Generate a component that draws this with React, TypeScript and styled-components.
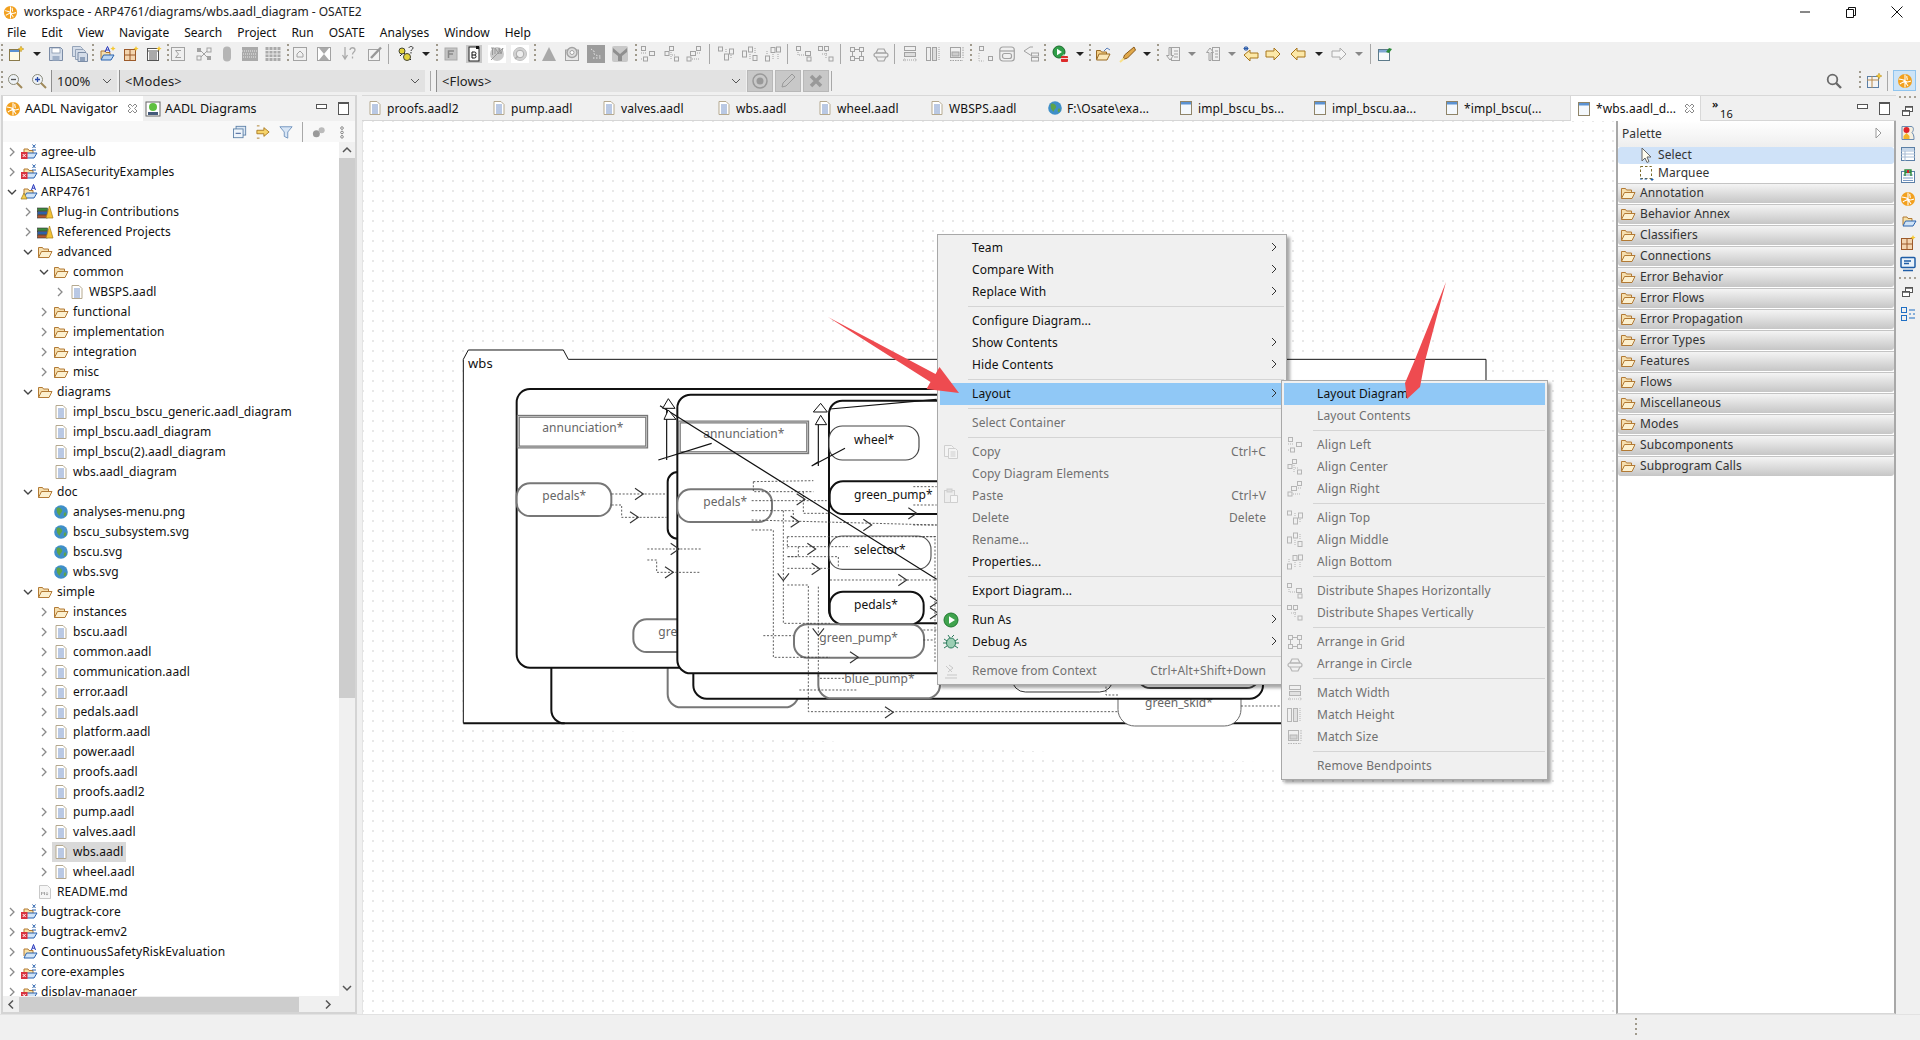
import React from "react";
import styled, { createGlobalStyle } from "styled-components";

const GlobalStyle = createGlobalStyle`
    html, body { margin: 0; padding: 0; background: #f0f0f0; }
    body { font-family: "Noto Sans", "Noto Sans CJK SC", sans-serif; font-size: 12px; color: #111; }
`;

const G = "#a2a2a2";
const STAR = <path d="M13 0l.8 1.8 1.8.8-1.8.8L13 5l-.8-1.6-1.8-.8 1.8-.8z" fill="#f5c832" />;
const BIGSTAR = <path d="M13 0l.9 2.1L16 3l-2.1.9L13 6l-.9-2.1L10 3l2.1-.9z" fill="#f5c832" stroke="#a8801a" strokeWidth=".4" />;
const PROJECT = (
    <>
        <path d="M3 12V5h4l1 1.5h4V9" fill="#f9e3a8" stroke="#b27a35" />
        <path d="M3 14l2.5-5H16l-3 5z" fill="#cfe3f7" stroke="#2a62ad" />
    </>
);
const LETTER_A = <path d="M10.5 6l2-5.5 2 5.5M11.3 4.2h2.5" stroke="#2233bb" fill="none" />;
const ICONS: Record<string, React.ReactNode> = {
    osate: (
        <>
            <circle cx="8" cy="8" r="7" fill="#f2a01e" />
            <path d="M8 1.5v13M2 6c3 1 4 0 6 2s3 1 6 0M3 11c2-2 3-1 5-3M10 3c-1 2 1 2 0 4M11 13c-1-2-2-2-3-5" stroke="#fff" strokeWidth="1.1" fill="none" />
        </>
    ),
    file: (
        <>
            <path d="M3 1.5h7l3 3v10H3z" fill="#fff" stroke="#b5a98f" />
            <path d="M5 5h6M5 7h6M5 9h6M5 11h6M5 13h6" stroke="#7592c8" />
        </>
    ),
    winfile: (
        <>
            <rect x="2.5" y="1.5" width="11" height="13" fill="#f4f8fc" stroke="#8f8468" />
            <rect x="3" y="2" width="10" height="2.5" fill="#5b92d2" />
        </>
    ),
    folder: (
        <>
            <path d="M1.5 13.5v-10h4l1 1.5h5v2.5" fill="#f6dfae" stroke="#b27a35" />
            <path d="M1.5 13.5l3-6H15l-3 6z" fill="#fcf0cf" stroke="#b27a35" />
        </>
    ),
    bluefolder: (
        <>
            <path d="M3 12V4h4l1 1.5h4V8" fill="#f9e3a8" stroke="#b27a35" />
            <path d="M3 13l2.5-5H16l-3 5z" fill="#cfe3f7" stroke="#2a62ad" />
        </>
    ),
    projx: (
        <>
            {PROJECT}
            <path d="M11.5 .5l3 3.5M14.5 .5l-3 3.5M11 6h4" stroke="#2a62ad" fill="none" />
            <rect x="0" y="8" width="6.5" height="7" fill="#d9343f" />
            <path d="M1.7 10l3 3M4.7 10l-3 3" stroke="#fff" />
        </>
    ),
    proja: (
        <>
            {PROJECT}
            {LETTER_A}
        </>
    ),
    projw: (
        <>
            {PROJECT}
            {LETTER_A}
            <path d="M0 15l3-6 3 6z" fill="#f5cd4a" stroke="#9a7a22" strokeWidth=".7" />
        </>
    ),
    lib: (
        <>
            <rect x=".5" y="4" width="10" height="3" fill="#3c8a3c" stroke="#333" strokeWidth=".6" />
            <rect x=".5" y="7.5" width="10" height="3" fill="#2f5fa8" stroke="#333" strokeWidth=".6" />
            <rect x=".5" y="11" width="10" height="3" fill="#b5572c" stroke="#333" strokeWidth=".6" />
            <path d="M9 14l3.5-12L16 14z" fill="#f3c235" stroke="#a77e18" strokeWidth=".7" />
        </>
    ),
    globe: (
        <>
            <circle cx="8" cy="8" r="6.8" fill="#3f8fc8" />
            <path d="M4 4c2-1 4 0 5 2s-2 3-2 5-3-2-3-3-1-3 0-4zM11 9c2-1 3 0 2 2s-3 2-2-2z" fill="#5da34a" />
        </>
    ),
    md: (
        <>
            <path d="M2.5 1.5h8l3 3v10h-11z" fill="#f6f6f6" stroke="#c9c9c9" />
            <path d="M4.5 11V8L6 9.5 7.5 8v3M10 8v3M8.800 10l1.200 1 1.200-1" stroke="#a8a8a8" fill="none" />
        </>
    ),
    newfile: (
        <>
            <rect x="1.5" y="3.5" width="10" height="11" fill="#fffbe6" stroke="#8a7a4a" />
            <rect x="2" y="4" width="9" height="2" fill="#5b92d2" />
            {BIGSTAR}
        </>
    ),
    save: (
        <>
            <path d="M1.5 1.5h11l2 2v11h-13z" fill="#d5dde9" stroke="#7b8ca6" />
            <rect x="4" y="2" width="8" height="5" fill="#fff" stroke="#7b8ca6" strokeWidth=".7" />
            <rect x="4.5" y="10" width="7" height="4.5" fill="#9fb0c8" />
        </>
    ),
    saveall: (
        <>
            <path d="M.5 .5h8l2 2v8H.5z" fill="#d5dde9" stroke="#94a3b8" />
            <path d="M3.5 3.5h8l2 2v8h-10z" fill="#d5dde9" stroke="#94a3b8" />
            <path d="M6 6.5h8L15.5 8v7.5H6z" fill="#d5dde9" stroke="#7b8ca6" />
            <rect x="8" y="11" width="5" height="4" fill="#8fa1bb" />
        </>
    ),
    newa: (
        <>
            <path d="M1 13V5h4l1 1.500h4V9" fill="#f6dfae" stroke="#b27a35" />
            <path d="M1 14l2.5-5H14l-3 5z" fill="#bcd6f2" stroke="#2a62ad" />
            <path d="M5 6L7.5.5 10 6M6 4h3" stroke="#2233bb" fill="none" />
            {STAR}
        </>
    ),
    newpkg: (
        <>
            <rect x="1.5" y="3.5" width="11" height="11" fill="#f3d5b0" stroke="#9c5a2a" />
            <path d="M7 3v12M1 9h12" stroke="#9c5a2a" />
            {STAR}
        </>
    ),
    newtbl: (
        <>
            <rect x="1.5" y="2.5" width="11" height="12" fill="#fff" stroke="#555" />
            <path d="M1 5h12M3 7h8M3 9h8M3 11h8M3 13h8" stroke="#555" />
            {STAR}
        </>
    ),
    sigma: (
        <>
            <rect x="1.5" y="1.5" width="13" height="13" fill="none" stroke={G} />
            <path d="M11 4.5H5.5L8.5 8l-3 3.5H11" stroke={G} fill="none" />
        </>
    ),
    cross: (
        <>
            <path d="M5 5l6 6M11 5l-6 6" stroke={G} fill="none" />
            <rect x="1" y="2" width="4" height="4" fill={G} />
            <rect x="11" y="2" width="4" height="4" fill="none" stroke={G} />
            <rect x="1" y="10" width="4" height="4" fill="none" stroke={G} />
            <rect x="11" y="10" width="4" height="4" fill={G} />
        </>
    ),
    pill: <rect x="4" y=".5" width="8" height="15" rx="4" fill="#b5b5b5" />,
    matrix: (
        <>
            <rect x="0" y="1" width="16" height="14" fill="#aaa" />
            <path d="M0 5h16M1 8h14M1 11h14" stroke="#e8e8e8" strokeDasharray="1 1" />
        </>
    ),
    grid2: (
        <>
            <rect x=".5" y="1" width="15" height="14" fill="#aaa" />
            <path d="M4 1v14M8 1v14M12 1v14M0 4.5h16M0 8h16M0 11.5h16" stroke="#e8e8e8" />
        </>
    ),
    tray: (
        <>
            <rect x="1.5" y="1.5" width="13" height="13" fill="none" stroke={G} />
            <path d="M5 8l3-3 3 3v3H5z" fill="none" stroke={G} />
        </>
    ),
    hour: (
        <>
            <rect x="1.5" y="1.5" width="13" height="13" fill="#fff" stroke={G} />
            <path d="M3 2l5 6 5-6zM3 14l5-6 5 6z" fill="#aaa" />
        </>
    ),
    qdown: <path d="M4 1v11M1.5 9L4 13l2.5-4M9 4c0-3 5-3 5 0 0 2-2.500 2-2.500 4.500M11.5 10.500v2" fill="none" stroke="#aaa" strokeWidth="1.3" />,
    edit: (
        <>
            <rect x="1.5" y="3.5" width="11" height="11" fill="#f4f4f4" stroke={G} />
            <path d="M4 12L14 1.5" stroke="#999" strokeWidth="2.5" />
        </>
    ),
    bug: (
        <>
            <path d="M2 3l11 11M2 10l5-5" stroke="#222" />
            <circle cx="4" cy="5" r="3" fill="#e4d33a" stroke="#443" />
            <circle cx="9" cy="11" r="3.5" fill="#e4d33a" stroke="#443" />
            <path d="M11 2c0-2 4-2 4 0 0 1.5-2 1.5-2 3M13 6v1.5" stroke="#333" fill="none" />
        </>
    ),
    docf: (
        <>
            <rect x="2" y="2" width="12" height="12" fill="#c4c4c4" stroke="#aaa" />
            <path d="M5.5 12V5H11M5.5 8H10" stroke="#888" strokeWidth="1.5" fill="none" />
        </>
    ),
    docb: (
        <>
            <rect x="0" y="-1" width="16" height="18" fill="#c8c8c8" />
            <rect x="3" y="1" width="10" height="14" fill="#fff" stroke="#222" />
            <path d="M6 12V6h2.5a1.4 1.4 0 010 3H6m2.500 0a1.5 1.5 0 010 3H6" fill="none" stroke="#111" />
            <rect x="10" y="0" width="3" height="3" fill="#111" />
        </>
    ),
    inv: (
        <>
            <rect x="-1" y="-1" width="18" height="18" fill="#fff" />
            <circle cx="8" cy="8" r="7" fill="#c9c9c9" />
            <path d="M2 2h3M3.5 2v7M6 8V2l4 6V2M10 2l2 6 2-6M2 14L14 2" stroke="#999" fill="none" />
        </>
    ),
    circ: (
        <>
            <rect x="-1" y="-1" width="18" height="18" fill="#fff" />
            <circle cx="8" cy="8" r="6.5" fill="#d3d3d3" stroke="#c0c0c0" />
            <circle cx="8" cy="8" r="3.8" fill="#eee" stroke="#aaa" />
            <path d="M3 13l3-3" stroke="#aaa" strokeWidth="1.5" />
        </>
    ),
    tri: <path d="M8 1l7 14H1z" fill="#a9a9a9" />,
    shield: (
        <>
            <rect x="1.5" y="4" width="13" height="10.5" fill="#e8e8e8" stroke={G} />
            <circle cx="8" cy="6.5" r="5" fill="#ddd" stroke={G} strokeWidth="1.5" />
            <circle cx="8" cy="6.5" r="2" fill="#fff" stroke={G} />
        </>
    ),
    dark: (
        <>
            <rect x="-1" y="-1" width="18" height="18" fill="#9c9c9c" />
            <path d="M3 3l3 2 0 3 4 2 3 0M5 12h8" stroke="#e8e8e8" strokeDasharray="1.5 1.5" fill="none" />
        </>
    ),
    chev: (
        <>
            <rect x="0" y="0" width="16" height="16" rx="2" fill="#c8c8c8" />
            <path d="M1 2l7 6 7-6v4l-5 4v5H6v-5L1 6z" fill="#8f8f8f" />
        </>
    ),
    al1: (
        <g fill="none" stroke={G}>
            <rect x="1.5" y=".5" width="4" height="4" />
            <rect x="9.5" y="5.5" width="5" height="4" />
            <rect x="3.5" y="11" width="4" height="4" />
            <path d="M1 7h5M1 13h2" strokeDasharray="1 1" />
        </g>
    ),
    al2: (
        <g fill="none" stroke={G}>
            <rect x="5.5" y=".5" width="4" height="4" />
            <rect x="1" y="5.5" width="4" height="4" />
            <rect x="10.5" y="11" width="4" height="4" />
            <path d="M7 6v8M8 9h4" strokeDasharray="1 1" />
        </g>
    ),
    al3: (
        <g fill="none" stroke={G}>
            <rect x="10.5" y=".5" width="4" height="4" />
            <rect x="4.5" y="5.5" width="5" height="4" />
            <rect x="1" y="11" width="4" height="4" />
            <path d="M11 7h4M6 13h8" strokeDasharray="1 1" />
        </g>
    ),
    al4: (
        <g fill="none" stroke={G}>
            <rect x=".5" y="1" width="4" height="4" />
            <rect x="6.5" y="8" width="4" height="6" />
            <rect x="11.5" y="3" width="4" height="5" />
            <path d="M8 3v4M13 9v4" strokeDasharray="1 1" />
        </g>
    ),
    al5: (
        <g fill="none" stroke={G}>
            <rect x=".5" y="5" width="4" height="6" />
            <rect x="6.5" y="1" width="4" height="5" />
            <rect x="11" y="9.5" width="4" height="5" />
            <path d="M8 8v5M13 2v6" strokeDasharray="1 1" />
        </g>
    ),
    al6: (
        <g fill="none" stroke={G}>
            <rect x=".5" y="10" width="4" height="5" />
            <rect x="6" y="1.5" width="4" height="5" />
            <rect x="11.5" y="1" width="4" height="5" />
            <path d="M2 5v4M8 8v6M13 8v6" strokeDasharray="1 1" />
        </g>
    ),
    di1: (
        <g fill="none" stroke={G}>
            <rect x=".5" y=".5" width="4" height="4" />
            <rect x="9.5" y="5.5" width="5" height="4" />
            <rect x="11" y="11" width="4" height="4" />
            <path d="M2 6v3h7" strokeDasharray="1 1" />
        </g>
    ),
    di2: (
        <g fill="none" stroke={G}>
            <rect x=".5" y=".5" width="4" height="4" />
            <rect x="6.5" y=".5" width="4" height="4" />
            <rect x="11" y="11" width="4" height="4" />
            <path d="M8 5v7M4 8h5" strokeDasharray="1 1" />
        </g>
    ),
    agrid: (
        <g fill="none" stroke={G}>
            <rect x="1.5" y="1.5" width="4" height="4" />
            <rect x="10.5" y="1.5" width="4" height="4" />
            <rect x="1.5" y="10.5" width="4" height="4" />
            <rect x="10.5" y="10.5" width="4" height="4" />
            <path d="M6 3.5h4M6 12.5h4M3.5 6v4M12.5 6v4" />
        </g>
    ),
    acircle: (
        <g fill="none" stroke={G} strokeWidth="1.2">
            <path d="M5 3h6l2 4H3z" />
            <rect x="1" y="7" width="14" height="4" rx="2" />
            <path d="M3 11l2 4h6l2-4" />
        </g>
    ),
    mw: (
        <g fill="none" stroke={G}>
            <rect x="2.5" y=".5" width="11" height="4" />
            <rect x="2.5" y="6.5" width="11" height="4" fill="#ddd" />
            <path d="M1 14h14M3 12.5L1.5 14 3 15.5M13 12.5l1.5 1.5-1.5 1.5" strokeDasharray="1 1" />
        </g>
    ),
    mh: (
        <g fill="none" stroke={G}>
            <rect x=".5" y="1.5" width="4" height="13" />
            <rect x="6.5" y="1.5" width="4" height="13" fill="#ddd" />
            <path d="M13 1v14" strokeDasharray="1 1" />
        </g>
    ),
    ms: (
        <g fill="none" stroke={G}>
            <rect x="1.5" y="1.5" width="10" height="10" />
            <rect x="3" y="6" width="7" height="4" fill="#ccc" />
            <path d="M14 1v11M1 14.5h13" strokeDasharray="1.5 1" />
        </g>
    ),
    bend: (
        <g fill="none" stroke={G}>
            <rect x="1.5" y=".5" width="4" height="4" />
            <rect x="10.5" y="10.5" width="4" height="4" />
            <path d="M1 7v8h5" strokeDasharray="1 1.5" />
        </g>
    ),
    cyl: (
        <g fill="none" stroke={G} strokeWidth="1.2">
            <rect x=".8" y="1" width="14.5" height="14" rx="3" />
            <path d="M1 5h14" />
            <rect x="3.5" y="7.5" width="9" height="5" rx="2" />
        </g>
    ),
    route: (
        <g fill="none" stroke={G}>
            <path d="M1 5l6-4h3M1 5l8 5" />
            <rect x="8.5" y="7" width="7" height="3" />
            <rect x="8.5" y="11.5" width="7" height="3.5" />
        </g>
    ),
    run: (
        <>
            <circle cx="7" cy="6" r="6" fill="#2f9e48" stroke="#1a6a2c" />
            <path d="M5 2.8L10 6 5 9.2z" fill="#fff" />
            <rect x="9" y="10" width="7" height="6" rx="1" fill="#dd2a2a" />
            <path d="M9 12.5h7M11 10V9h3v1" stroke="#fff" fill="none" strokeWidth=".8" />
        </>
    ),
    opfolder: (
        <>
            <path d="M1.5 13V4.5h4l1 1.500h5V8" fill="#f4cf86" stroke="#9a6a22" />
            <path d="M1.5 14L4 8h11l-3 6z" fill="#fbe7b7" stroke="#9a6a22" />
            <path d="M9 5l3-3 3 2" stroke="#5b7fb8" fill="none" />
        </>
    ),
    pen: (
        <>
            <path d="M14 1l1.5 3-8 8L3 13.5 4.5 9z" fill="#e0a84a" stroke="#8a5a1a" />
            <path d="M0 16l4-3.500" stroke="#f8e08a" strokeWidth="2" />
        </>
    ),
    down: (
        <g fill="none" stroke={G}>
            <rect x="6.5" y="1.5" width="8" height="13" />
            <path d="M4 1.5v8H1.5L5 14l3.5-4.500H6v-8zM9 5h4M9 8h4M9 11h4" fill="#eee" />
        </g>
    ),
    up: (
        <g fill="none" stroke={G}>
            <rect x="7.5" y="1.5" width="7" height="13" />
            <path d="M4 14.5v-8H1.5L5 2l3.5 4.5H6v8zM10 5h3M10 8h3M10 11h3" fill="#eee" />
        </g>
    ),
    back: <path d="M1 8l6-6v3h8v6H7v3z" fill="#fce8a8" stroke="#a8761c" />,
    fwd: <path d="M15 8L9 2v3H1v6h8v3z" fill="#fce8a8" stroke="#a8761c" />,
    backstar: (
        <>
            <path d="M1 9l6-5v3h8v5H7v3z" fill="#fce8a8" stroke="#a8761c" />
            <path d="M3 0v5M.5 2.5h5M1 1l4 3M5 1L1 4" stroke="#2a5aa8" />
        </>
    ),
    fwdg: <path d="M15 8L9 2v3H1v6h8v3z" fill="#f5f5f5" stroke="#aaa" />,
    persp: (
        <>
            <rect x="1.5" y="3.5" width="11" height="11" fill="#f6fafc" stroke="#5c7a8a" />
            <rect x="2" y="4" width="10" height="2.5" fill="#7da7d4" />
            <path d="M9 6l3-4 3 1-3 4z" fill="#2a8a3a" />
        </>
    ),
    openp: (
        <>
            <rect x="1.5" y="3.5" width="11" height="11" fill="#f4f4f4" stroke="#5b7fa6" />
            <path d="M1 7h12M6 3v12" stroke="#b98a4a" />
            {BIGSTAR}
        </>
    ),
    lens: (
        <>
            <circle cx="6.5" cy="6.5" r="4.8" fill="none" stroke="#6a6a6a" strokeWidth="1.8" />
            <path d="M10 10l5 5" stroke="#6a6a6a" strokeWidth="2.4" />
        </>
    ),
    zoomout: (
        <>
            <circle cx="6.5" cy="6.5" r="5" fill="#eef2f6" stroke="#8a8a7a" />
            <path d="M4 6.5h5" stroke="#555" strokeWidth="1.3" />
            <path d="M10 10l5 5" stroke="#a08a5a" strokeWidth="2" />
        </>
    ),
    zoomin: (
        <>
            <circle cx="6.5" cy="6.5" r="5" fill="#eef2f6" stroke="#8a8a7a" />
            <path d="M4 6.5h5M6.5 4v5" stroke="#2a4aa8" strokeWidth="1.3" />
            <path d="M10 10l5 5" stroke="#a08a5a" strokeWidth="2" />
        </>
    ),
    diagram: (
        <>
            <rect x="1" y="1" width="14" height="14" fill="#fff" stroke="#666" />
            <circle cx="8" cy="6" r="4" fill="#5fc040" />
            <rect x="3" y="11" width="10" height="3" fill="#445a7a" />
        </>
    ),
    collapse: (
        <>
            <rect x="3.5" y="1.5" width="11" height="10" fill="#dbe7f4" stroke="#5b7fa6" />
            <rect x=".5" y="4.5" width="11" height="10" fill="#eef4fa" stroke="#5b7fa6" />
            <path d="M3 9.5h6" stroke="#2a4a88" />
        </>
    ),
    link: <path d="M1 6h8V3l6 5-6 5v-3H1zM1 1h3M1 15h3" fill="#f7d46a" stroke="#a8761c" />,
    filter: <path d="M1 2h14l-5 6v7l-4-2V8z" fill="#d8e6f6" stroke="#6a8fba" />,
    graydots: (
        <>
            <circle cx="5" cy="10" r="4" fill="#9a9a9a" />
            <circle cx="11" cy="6" r="3.5" fill="#bbb" />
        </>
    ),
    vmenu: <path d="M8 2a1.5 1.5 0 110 3 1.5 1.5 0 010-3zM8 7a1.5 1.5 0 110 3 1.5 1.5 0 010-3zM8 12a1.5 1.5 0 110 3 1.5 1.5 0 010-3z" fill="#fff" stroke="#777" />,
    restore: (
        <g fill="none" stroke="#555">
            <rect x="5.5" y="3.5" width="7" height="5" fill="#fff" />
            <rect x="2.5" y="7.5" width="7" height="5" fill="#fff" />
            <path d="M5 4h8M2 8h8" strokeWidth="1.5" />
        </g>
    ),
    report: (
        <>
            <path d="M2 1.5h9c3 0 3 4 1 6 2 2 2 5 2 7H2z" fill="#f6efe0" stroke="#6a8ab0" />
            <circle cx="6.5" cy="5" r="3" fill="#e0242a" />
            <path d="M3.5 14v-3l3-3 3 3v3z" fill="#f5b52a" />
        </>
    ),
    table: (
        <>
            <rect x="1.5" y="1.5" width="13" height="13" fill="#fff" stroke="#5b7fa6" />
            <path d="M1 5h14M1 8h14M1 11h14M5 5v10" stroke="#a8bcd4" />
            <rect x="2" y="2" width="12" height="3" fill="#c8d8ea" />
        </>
    ),
    anote: (
        <>
            <rect x="1.5" y="3.5" width="13" height="11" fill="#fff" stroke="#5b7fa6" />
            <path d="M3 7h10M3 10h10M3 12.5h10" stroke="#7a9ac4" />
            <path d="M5 8V2h6v6M5 4.5h6" stroke="#2a8a3a" strokeWidth="1.4" fill="none" />
            <path d="M7 2h2v3H7z" fill="#d0242a" />
        </>
    ),
    monitor: (
        <>
            <rect x="1" y="1.5" width="14" height="10" rx="1" fill="#eaf2fa" stroke="#1f5da6" strokeWidth="1.5" />
            <path d="M4 5h7M4 7.5h5M3 14.5h10" stroke="#1f5da6" strokeWidth="1.3" />
        </>
    ),
    outline: (
        <g fill="none" stroke="#1f6fc4">
            <rect x="1.5" y="1.5" width="5" height="5" />
            <rect x="1.5" y="9.5" width="5" height="5" />
            <path d="M9 4h6M9 12h6M9 8h2M13 8h2" />
        </g>
    ),
    cursor: <path d="M3 1v13l3-3 2 4.5 2-1-2-4.5h4z" fill="#fffdf0" stroke="#666" />,
    marquee: (
        <>
            <rect x="1.5" y="1.5" width="11" height="12" fill="none" stroke="#7a6a2a" strokeDasharray="2.5 2" />
            <path d="M1 14h9" stroke="#1f5da6" strokeDasharray="2.5 2" />
            <path d="M13 13v3M11.5 14.5h3" stroke="#1f5da6" />
        </>
    ),
    copy: (
        <g fill="#f6f6f6" stroke="#c4c4c4">
            <path d="M1.5 1.5h7l2 2v9h-9z" />
            <path d="M5.5 4.5h7l2 2v8h-9z" />
            <path d="M7.5 8h5M7.5 10h5M7.5 12h5" />
        </g>
    ),
    paste: (
        <g fill="#ececec" stroke="#c4c4c4">
            <rect x="1.5" y="2.5" width="10" height="12" />
            <rect x="4" y="1" width="5" height="3" fill="#d8d8d8" />
            <path d="M7.5 7.5h7v7h-7z" fill="#f8f8f8" />
        </g>
    ),
    runas: (
        <>
            <circle cx="8" cy="8" r="7" fill="#3fa34d" stroke="#217a30" />
            <path d="M6 4.200L12 8l-6 3.800z" fill="#fff" />
        </>
    ),
    debug: (
        <>
            <path d="M1 5l3 2M15 5l-3 2M0 9h3M16 9h-3M1 14l3-2M15 14l-3-2M5 1l2 3M11 1L9 3" stroke="#2a7a5a" />
            <ellipse cx="8" cy="9" rx="4.5" ry="5" fill="#9ccfb4" stroke="#2a7a5a" />
        </>
    ),
    removectx: <path d="M4 12h10M3 3l6 6M6 2l4 3-5 4M2 15h12" stroke="#bbb" fill="none" />,
};

const IconBox = styled.svg`
    flex: none;
    display: block;
    overflow: visible;
`;

function Icon({ n, s = 16 }: { n: string; s?: number }) {
    return (
        <IconBox width={s} height={s} viewBox="0 0 16 16">
            {ICONS[n]}
        </IconBox>
    );
}

const Root = styled.div`
    position: relative;
    width: 1920px;
    height: 1040px;
    overflow: hidden;
    display: flex;
    flex-direction: column;
    background: #f0f0f0;
    letter-spacing: 0.1px;
`;

const TitleBar = styled.div`
    height: 24px;
    background: #fff;
    display: flex;
    align-items: center;
    padding-left: 3px;
    gap: 6px;
`;
const TitleText = styled.span`
    font-size: 12px;
    color: #222;
    letter-spacing: 0;
    padding-bottom: 2px;
`;
const WindowButtons = styled.div`
    margin-left: auto;
    display: flex;
    align-items: center;
    height: 100%;
`;
const WindowButton = styled.div`
    width: 46px;
    display: flex;
    justify-content: center;
    svg { display: block; }
`;
const MenuBar = styled.div`
    height: 17px;
    background: #fff;
    display: flex;
    align-items: center;
    padding-left: 7px;
    padding-bottom: 1px;
    gap: 15px;
    letter-spacing: 0;
`;

const ToolRow = styled.div`
    height: 24px;
    display: flex;
    align-items: center;
`;
const ToolRowTwo = styled(ToolRow)`
    height: 29px;
`;
const Slot = styled.div<{ $gap: number; $w: number }>`
    flex: none;
    margin-left: ${(p) => p.$gap}px;
    width: ${(p) => p.$w}px;
    display: flex;
    justify-content: center;
    align-items: center;
`;
const Grip = styled.div`
    width: 2px;
    height: 20px;
    background: repeating-linear-gradient(to bottom, #a09a8c 0 2px, transparent 2px 5px);
`;
const VLine = styled.div`
    width: 1px;
    height: 20px;
    background: #a8a8a8;
`;
const Caret = styled.div<{ $light?: boolean }>`
    width: 0;
    height: 0;
    border-left: 4px solid transparent;
    border-right: 4px solid transparent;
    border-top: 4px solid ${(p) => (p.$light ? "#888" : "#222")};
`;
const Combo = styled.div<{ $w: number }>`
    width: ${(p) => p.$w}px;
    height: 22px;
    flex: none;
    background: #e2e2e2;
    border-left: 1px solid #8e8e8e;
    display: flex;
    align-items: center;
    padding: 0 5px;
    box-sizing: border-box;
    justify-content: space-between;
    font-size: 13px;
    margin-right: 2px;
    color: #222;
`;
const Chevron = styled.svg`
    flex: none;
    display: block;
`;
const StateButton = styled.div`
    width: 26px;
    height: 22px;
    flex: none;
    margin-right: 2px;
    background: #c8c8c8;
    border: 1px solid #b8b8b8;
    box-sizing: border-box;
    display: flex;
    justify-content: center;
    align-items: center;
`;
const RightTools = styled.div`
    margin-left: auto;
    display: flex;
    align-items: center;
    height: 100%;
`;
const ActivePerspective = styled.div`
    width: 23px;
    height: 21px;
    margin: 0 4px 0 5px;
    background: #cde4f7;
    border: 1px solid #8fc4ee;
    box-sizing: border-box;
    display: flex;
    align-items: center;
    justify-content: center;
`;

const Workbench = styled.div`
    height: 919px;
    display: flex;
`;
const NavigatorPane = styled.div`
    width: 356px;
    margin-left: 1px;
    box-sizing: border-box;
    border: 2px solid #d4d4d4;
    border-top: 1px solid #d8d8d8;
    display: flex;
    flex-direction: column;
`;
const PaneTabs = styled.div`
    height: 25px;
    flex: none;
    display: flex;
    align-items: flex-end;
    position: relative;
    background: #f0f0f0;
`;
const NavTab = styled.div<{ $active?: boolean; $w: number }>`
    width: ${(p) => p.$w}px;
    height: 100%;
    box-sizing: border-box;
    display: flex;
    align-items: center;
    gap: 4px;
    padding-left: 2px;
    background: ${(p) => (p.$active ? "#fff" : "transparent")};
    font-size: 12.5px;
    letter-spacing: 0;
`;
const CloseMark = styled.svg`
    margin-left: auto;
    margin-right: 5px;
    flex: none;
`;
const PaneControls = styled.div`
    margin-left: auto;
    align-self: center;
    display: flex;
    gap: 11px;
    padding-right: 6px;
`;
const MinBox = styled.div`
    width: 9px;
    height: 3px;
    border: 1px solid #555;
    background: #fff;
    align-self: flex-start;
    margin-top: 2px;
`;
const MaxBox = styled.div`
    width: 9px;
    height: 10px;
    border: 1px solid #555;
    border-top-width: 2px;
    background: #fff;
`;
const ViewToolbar = styled.div`
    height: 21px;
    flex: none;
    display: flex;
    align-items: center;
    justify-content: flex-end;
    gap: 9px;
    padding-right: 6px;
    background: #f8f8f8;
`;
const TreeShell = styled.div`
    flex: 1;
    min-height: 0;
    display: grid;
    grid-template-columns: 1fr 16px;
    grid-template-rows: 1fr 16px;
`;
const TreeList = styled.div`
    grid-column: 1;
    grid-row: 1;
    min-width: 0;
    min-height: 0;
    background: #fff;
    overflow: hidden;
    padding-left: 1px;
`;
const TreeRow = styled.div<{ $level: number }>`
    height: 20px;
    display: flex;
    align-items: center;
    padding-left: ${(p) => p.$level * 16}px;
    white-space: nowrap;
`;
const Twisty = styled.div`
    width: 16px;
    flex: none;
    display: flex;
    justify-content: center;
`;
const TreeLabel = styled.div<{ $selected?: boolean }>`
    height: 20px;
    display: flex;
    align-items: center;
    gap: 4px;
    padding: 0 2px 0 1px;
    background: ${(p) => (p.$selected ? "#d9d9d9" : "transparent")};
`;
const TreeText = styled.span`
    padding-bottom: 1px;
`;
const ScrollV = styled.div`
    grid-column: 2;
    grid-row: 1;
    background: #f0f0f0;
    display: flex;
    flex-direction: column;
    align-items: center;
    position: relative;
    min-height: 0;
`;
const ScrollArrowEnd = styled.svg`
    position: absolute;
    bottom: 0;
`;
const ScrollThumbV = styled.div`
    width: 16px;
    height: 540px;
    flex: none;
    background: #cdcdcd;
`;
const ScrollH = styled.div`
    grid-column: 1 / 3;
    grid-row: 2;
    background: #f0f0f0;
    display: flex;
    align-items: center;
`;
const ScrollThumbH = styled.div`
    width: 280px;
    height: 15px;
    background: #cdcdcd;
    margin: 0 24px 0 0;
    flex: none;
`;

const EditorPane = styled.div`
    width: 1534px;
    margin-left: 5px;
    box-sizing: border-box;
    display: flex;
    flex-direction: column;
    border-top: 1px solid #d8d8d8;
`;
const EditorTabs = styled.div`
    height: 25px;
    flex: none;
    display: flex;
    background: #f0f0f0;
    border-bottom: 1px solid #d6d6d6;
    box-sizing: border-box;
    position: relative;
`;
const EditorTab = styled.div<{ $w: number; $active?: boolean }>`
    width: ${(p) => p.$w}px;
    height: ${(p) => (p.$active ? "25px" : "100%")};
    flex: none;
    box-sizing: border-box;
    display: flex;
    align-items: center;
    gap: 4px;
    padding-left: 5px;
    white-space: nowrap;
    background: ${(p) => (p.$active ? "#fff" : "transparent")};
    border-left: ${(p) => (p.$active ? "1px solid #d8d8d8" : "none")};
    border-right: ${(p) => (p.$active ? "1px solid #d8d8d8" : "none")};
`;
const ChevronCount = styled.div`
    width: 40px;
    padding-left: 11px;
    font-size: 11px;
    line-height: 11px;
    padding-top: 2px;
    font-weight: 600;
    span { display: block; margin-left: 8px; margin-top: -1px; font-weight: 400; }
`;
const EditorBody = styled.div`
    flex: 1;
    min-height: 0;
    display: flex;
    border-left: 1px solid #e4e4e4;
`;
const Canvas = styled.div`
    flex: 1;
    min-width: 0;
    position: relative;
    overflow: hidden;
    background-color: #fff;
    background-image: radial-gradient(circle at 1px 1px, #e8e8e8 1.1px, transparent 1.3px);
    background-size: 10px 10px;
    background-position: 9px 9px;
`;
const DiagramSvg = styled.svg`
    position: absolute;
    left: 0;
    top: 0;
    font-family: "Noto Sans", sans-serif;
`;
const Palette = styled.div`
    width: 280px;
    flex: none;
    box-sizing: border-box;
    border-left: 2px solid #a8a8a8;
    border-right: 2px solid #a8a8a8;
    border-bottom: 1px solid #d8d8d8;
    background: #fff;
    display: flex;
    flex-direction: column;
    color: #333;
`;
const PaletteHead = styled.div`
    height: 26px;
    flex: none;
    background: linear-gradient(#fff, #eeeeee);
    display: flex;
    align-items: center;
    justify-content: space-between;
    padding: 0 12px 2px 4px;
    box-sizing: border-box;
`;
const PaletteTool = styled.div<{ $on?: boolean }>`
    height: ${(p) => (p.$on ? 17 : 18)}px;
    flex: none;
    display: flex;
    align-items: center;
    gap: 3px;
    padding: 0 0 ${(p) => (p.$on ? 2 : 1)}px 21px;
    box-sizing: border-box;
    border-radius: 3px;
    background: ${(p) => (p.$on ? "#cfe2f8" : "transparent")};
`;
const Drawer = styled.div`
    height: 20px;
    flex: none;
    margin-top: 1px;
    display: flex;
    align-items: center;
    gap: 4px;
    padding: 0 0 2px 2px;
    background: linear-gradient(#f4f4f4, #c6c6c6);
    border-radius: 0 0 3px 3px;
    border-top: 1px solid #c4c4c4;
    box-sizing: border-box;
`;

const TrimBar = styled.div`
    width: 24px;
    flex: none;
    display: flex;
    flex-direction: column;
    align-items: center;
    padding-top: 1px;
`;
const TrimGrip = styled.div<{ $top?: number }>`
    width: 18px;
    height: 2px;
    flex: none;
    margin-top: ${(p) => p.$top ?? 0}px;
    background: repeating-linear-gradient(to right, #a8a296 0 2px, transparent 2px 5px);
`;
const TrimIcon = styled.div<{ $gap: number }>`
    margin-top: ${(p) => p.$gap}px;
    height: 16px;
    flex: none;
`;

const StatusBar = styled.div`
    flex: 1;
    display: flex;
    align-items: center;
    border-top: 1px solid #e2e2e2;
    padding-left: 1635px;
`;

const MenuPanel = styled.div<{ $left: number; $top: number; $w: number }>`
    position: absolute;
    left: ${(p) => p.$left}px;
    top: ${(p) => p.$top}px;
    width: ${(p) => p.$w}px;
    box-sizing: border-box;
    background: #f0f0f0;
    border: 1px solid #a8a8a8;
    padding: 2px;
    box-shadow: 3px 3px 3px rgba(0, 0, 0, 0.35);
`;
const MenuRow = styled.div<{ $hot?: boolean; $dis?: boolean; $col: number }>`
    height: 22px;
    box-sizing: border-box;
    display: flex;
    align-items: center;
    color: ${(p) => (p.$dis ? "#707070" : "#111")};
    background: ${(p) => (p.$hot ? "#90c8f6" : "transparent")};
    white-space: nowrap;
    padding: 0 0 2px ${(p) => p.$col}px;
    position: relative;
`;
const MenuIconSlot = styled.div<{ $dim?: boolean }>`
    position: absolute;
    left: 3px;
    top: 3px;
    opacity: ${(p) => (p.$dim ? 0.75 : 1)};
`;
const Shortcut = styled.span`
    margin-left: auto;
    margin-right: 18px;
`;
const Arrow = styled.svg`
    position: absolute;
    right: 7px;
    top: 5px;
`;
const MenuSep = styled.div<{ $col: number }>`
    height: 1px;
    margin: 3px 0 3px ${(p) => p.$col}px;
    background: #d4d4d4;
`;
const ArrowLayer = styled.svg`
    position: absolute;
    left: 0;
    top: 0;
    pointer-events: none;
`;

// center x of every toolbar item in the reference
const TOP_TOOLS: [string, number][] = [
    ["|", 2], ["newfile", 16], ["v", 37], ["save", 56], ["saveall", 80], ["|", 93], ["newa", 108], ["newpkg", 131], ["newtbl", 154],
    ["|", 168], ["sigma", 178], ["cross", 204], ["pill", 227], ["matrix", 250], ["grid2", 273], ["|", 288], ["tray", 300], ["hour", 324],
    ["qdown", 349], ["edit", 375], ["/", 388], ["bug", 406], ["v", 426], ["|", 437], ["docf", 451], ["docb", 474], ["inv", 497], ["circ", 520],
    ["|", 535], ["tri", 549], ["shield", 572], ["dark", 596], ["chev", 620], ["|", 636], ["al1", 648], ["al2", 672], ["al3", 694], ["/", 709],
    ["al4", 726], ["al5", 750], ["al6", 773], ["/", 787], ["di1", 804], ["di2", 826], ["/", 840], ["agrid", 857], ["acircle", 881], ["/", 894],
    ["mw", 910], ["mh", 934], ["ms", 957], ["|", 971], ["bend", 986], ["cyl", 1007], ["route", 1031], ["|", 1045], ["run", 1060], ["v", 1080],
    ["|", 1090], ["opfolder", 1103], ["pen", 1128], ["v", 1147], ["|", 1158], ["down", 1173], ["w", 1192], ["up", 1213], ["w", 1232],
    ["backstar", 1251], ["fwd", 1273], ["back", 1298], ["v", 1319], ["fwdg", 1339], ["w", 1359], ["/", 1370], ["persp", 1385],
];

const slotWidth = (k: string) => (k === "|" ? 2 : k === "/" ? 1 : k === "v" || k === "w" ? 8 : 16);

function TopToolbar() {
    let edge = 0;
    return (
        <ToolRow>
            {TOP_TOOLS.map(([k, c], i) => {
                const w = slotWidth(k);
                const gap = c - w / 2 - edge;
                edge = c + w / 2;
                return (
                    <Slot key={i} $gap={gap} $w={w}>
                        {k === "|" ? <Grip /> : k === "/" ? <VLine /> : k === "v" ? <Caret /> : k === "w" ? <Caret $light /> : <Icon n={k} />}
                    </Slot>
                );
            })}
        </ToolRow>
    );
}

const ChevronDown = () => (
    <Chevron width="10" height="6" viewBox="0 0 10 6">
        <path d="M1 1l4 4 4-4" fill="none" stroke="#555" />
    </Chevron>
);
const ChevronRight = ({ c = "#555" }: { c?: string }) => (
    <Chevron width="6" height="10" viewBox="0 0 6 10">
        <path d="M1 1l4 4-4 4" fill="none" stroke={c} strokeWidth="1.3" />
    </Chevron>
);
const ChevronOpen = () => (
    <Chevron width="10" height="6" viewBox="0 0 10 6">
        <path d="M1 1l4 4 4-4" fill="none" stroke="#444" strokeWidth="1.4" />
    </Chevron>
);
const XMark = () => (
    <CloseMark width="11" height="11" viewBox="0 0 11 11">
        <path d="M1 3l2-2 2.5 2.5L8 1l2 2-2.5 2.5L10 8l-2 2-2.5-2.5L3 10 1 8l2.5-2.5z" fill="#fff" stroke="#8a8a8a" />
    </CloseMark>
);

type TreeItem = [number, string, string, string];
const doc = (t: string, o = ">"): TreeItem => [2, o, "file", t];
const TREE: TreeItem[] = [
    [0, ">", "projx", "agree-ulb"],
    [0, ">", "projx", "ALISASecurityExamples"],
    [0, "v", "projw", "ARP4761"],
    [1, ">", "lib", "Plug-in Contributions"],
    [1, ">", "lib", "Referenced Projects"],
    [1, "v", "folder", "advanced"],
    [2, "v", "folder", "common"],
    [3, ">", "file", "WBSPS.aadl"],
    [2, ">", "folder", "functional"],
    [2, ">", "folder", "implementation"],
    [2, ">", "folder", "integration"],
    [2, ">", "folder", "misc"],
    [1, "v", "folder", "diagrams"],
    doc("impl_bscu_bscu_generic.aadl_diagram", ""),
    doc("impl_bscu.aadl_diagram", ""),
    doc("impl_bscu(2).aadl_diagram", ""),
    doc("wbs.aadl_diagram", ""),
    [1, "v", "folder", "doc"],
    [2, "", "globe", "analyses-menu.png"],
    [2, "", "globe", "bscu_subsystem.svg"],
    [2, "", "globe", "bscu.svg"],
    [2, "", "globe", "wbs.svg"],
    [1, "v", "folder", "simple"],
    [2, ">", "folder", "instances"],
    doc("bscu.aadl"),
    doc("common.aadl"),
    doc("communication.aadl"),
    doc("error.aadl"),
    doc("pedals.aadl"),
    doc("platform.aadl"),
    doc("power.aadl"),
    doc("proofs.aadl"),
    doc("proofs.aadl2", ""),
    doc("pump.aadl"),
    doc("valves.aadl"),
    doc("wbs.aadl"),
    doc("wheel.aadl"),
    [1, "", "md", "README.md"],
    [0, ">", "projx", "bugtrack-core"],
    [0, ">", "projx", "bugtrack-emv2"],
    [0, ">", "proja", "ContinuousSafetyRiskEvaluation"],
    [0, ">", "projx", "core-examples"],
    [0, ">", "projx", "display-manager"],
];

const TABS: [string, string, number][] = [
    ["file", "proofs.aadl2", 124],
    ["file", "pump.aadl", 110],
    ["file", "valves.aadl", 115],
    ["file", "wbs.aadl", 101],
    ["file", "wheel.aadl", 112],
    ["file", "WBSPS.aadl", 118],
    ["globe", "F:\\Osate\\exa...", 131],
    ["winfile", "impl_bscu_bs...", 134],
    ["winfile", "impl_bscu.aa...", 132],
    ["winfile", "*impl_bscu(...", 131],
];

const DRAWERS = ["Annotation", "Behavior Annex", "Classifiers", "Connections", "Error Behavior", "Error Flows", "Error Propagation", "Error Types", "Features", "Flows", "Miscellaneous", "Modes", "Subcomponents", "Subprogram Calls"];

const TRIM: [string, number][] = [["report", 6], ["table", 5], ["anote", 6], ["osate", 7], ["bluefolder", 6], ["newpkg", 6], ["monitor", 5]];

type Item = { t?: string; sub?: boolean; key?: string; dis?: boolean; icon?: string; hot?: boolean };
const MAIN_MENU: Item[] = [
    { t: "Team", sub: true },
    { t: "Compare With", sub: true },
    { t: "Replace With", sub: true },
    {},
    { t: "Configure Diagram..." },
    { t: "Show Contents", sub: true },
    { t: "Hide Contents", sub: true },
    {},
    { t: "Layout", sub: true, hot: true },
    {},
    { t: "Select Container", dis: true },
    {},
    { t: "Copy", key: "Ctrl+C", dis: true, icon: "copy" },
    { t: "Copy Diagram Elements", dis: true },
    { t: "Paste", key: "Ctrl+V", dis: true, icon: "paste" },
    { t: "Delete", key: "Delete", dis: true },
    { t: "Rename...", dis: true },
    { t: "Properties..." },
    {},
    { t: "Export Diagram..." },
    {},
    { t: "Run As", sub: true, icon: "runas" },
    { t: "Debug As", sub: true, icon: "debug" },
    {},
    { t: "Remove from Context", key: "Ctrl+Alt+Shift+Down", dis: true, icon: "removectx" },
];
const LAYOUT_MENU: Item[] = [
    { t: "Layout Diagram", hot: true },
    { t: "Layout Contents", dis: true },
    {},
    { t: "Align Left", dis: true, icon: "al1" },
    { t: "Align Center", dis: true, icon: "al2" },
    { t: "Align Right", dis: true, icon: "al3" },
    {},
    { t: "Align Top", dis: true, icon: "al4" },
    { t: "Align Middle", dis: true, icon: "al5" },
    { t: "Align Bottom", dis: true, icon: "al6" },
    {},
    { t: "Distribute Shapes Horizontally", dis: true, icon: "di1" },
    { t: "Distribute Shapes Vertically", dis: true, icon: "di2" },
    {},
    { t: "Arrange in Grid", dis: true, icon: "agrid" },
    { t: "Arrange in Circle", dis: true, icon: "acircle" },
    {},
    { t: "Match Width", dis: true, icon: "mw" },
    { t: "Match Height", dis: true, icon: "mh" },
    { t: "Match Size", dis: true, icon: "ms" },
    {},
    { t: "Remove Bendpoints", dis: true },
];

function ContextMenu({ items, left, top, w, col, sepCol }: { items: Item[]; left: number; top: number; w: number; col: number; sepCol: number }) {
    return (
        <MenuPanel $left={left} $top={top} $w={w}>
            {items.map((it, i) =>
                it.t ? (
                    <MenuRow key={i} $hot={it.hot} $dis={it.dis} $col={col}>
                        {it.icon && (
                            <MenuIconSlot $dim={it.dis}>
                                <Icon n={it.icon} />
                            </MenuIconSlot>
                        )}
                        {it.t}
                        {it.key && <Shortcut>{it.key}</Shortcut>}
                        {it.sub && (
                            <Arrow width="6" height="10" viewBox="0 0 6 10">
                                <path d="M1 1l4 4-4 4" fill="none" stroke="#333" />
                            </Arrow>
                        )}
                    </MenuRow>
                ) : (
                    <MenuSep key={i} $col={sepCol} />
                )
            )}
        </MenuPanel>
    );
}

// diagram is traced at 3x around (450,340), so all numbers below are in that space
const RIGHT_HEADS = [[555, 462], [540, 532], [662, 627], [645, 697], [1040, 478], [1022, 545], [1240, 555], [1072, 627], [1085, 687], [1345, 720], [1375, 520], [1200, 952], [1305, 1117], [1440, 785], [1440, 820]];
const DOWN_HEADS = [[1000, 700], [1105, 865]];
const DASHES = [
    "M485 462H650", "M485 495H515V532H650", "M592 627H752", "M592 660H620V697H752",
    "M910 425L1090 422", "M910 425V455H1090", "M905 482H1130", "M905 512H1030V545", "M905 540L1460 555", "M905 570H970V952H1140",
    "M1000 512V850H1140", "M1012 590H1460", "M1012 590V625", "M1012 620H1200", "M1045 620V650H1012", "M1012 650H1165V680", "M1012 685H1140",
    "M1140 720H1460", "M1012 735H1075V1115H2004", "M1105 740V1015", "M940 887H1030", "M1060 455V520H1140", "M1390 440H1460", "M1390 495H1460",
    "M1390 555H1460", "M1395 590H1455V965", "M1420 870H1460", "M1420 900H1455", "M1110 1015H1185", "M1048 1050H1220",
    "M1968 1040V1065H2004", "M2373 1098H2500V1050",
];
const dashStyle = { fill: "none", stroke: "#444", strokeWidth: 2.6, strokeDasharray: "6 5" };
const lineStyle = { fill: "none", stroke: "#111", strokeWidth: 3 };

const Node = ({ x, y, w, h, c = "#777", sw = 6, r = 40 }: { x: number; y: number; w: number; h: number; c?: string; sw?: number; r?: number }) => (
    <rect x={x} y={y} width={w} height={h} rx={r} fill="#fff" stroke={c} strokeWidth={sw} />
);
const Label = ({ x, y, c = "#666", children }: { x: number; y: number; c?: string; children: string }) => (
    <text x={x} y={y} fill={c} fontSize="36">
        {children}
    </text>
);
const DoubleBox = ({ x, y, w, h }: { x: number; y: number; w: number; h: number }) => (
    <>
        <rect x={x} y={y} width={w} height={h} fill="#fff" stroke="#777" strokeWidth="9" />
        <rect x={x} y={y} width={w} height={h} fill="none" stroke="#ddd" strokeWidth="2" />
    </>
);

function Diagram() {
    return (
        <DiagramSvg width="1251" height="892" viewBox="363 120 1251 892">
            <g transform="translate(450 339) scale(.33333)">
                <path d="M40 1150V58L55 30H340L355 58H3108V1300" fill="#fff" stroke="#111" strokeWidth="3" />
                <path d="M40 1150H3000" stroke="#111" strokeWidth="6" />
                <path d="M304 960V1110a40 40 0 0040 40" fill="none" stroke="#111" strokeWidth="6" />
                <Node x={653} y={950} w={392} h={152} />
                <Node x={2004} y={1020} w={369} h={138} r={50} c="#666" sw={3} />
                <Label x={2085} y={1102}>green_skid*</Label>
                <Node x={730} y={900} w={1709} h={176} c="#111" r={40} />
                <Node x={1686} y={950} w={303} h={106} c="#333" sw={3} />
                <Node x={2061} y={950} w={369} h={94} c="#444" />
                <Node x={1105} y={900} w={365} h={175} c="#777" />
                <Label x={1183} y={1030}>blue_pump*</Label>

                <Node x={200} y={147} w={2200} h={836} c="#111" r={40} />
                <DoubleBox x={205} y={229} w={385} h={92} />
                <Label x={277} y={276}>annunciation*</Label>
                <Node x={200} y={430} w={284} h={98} />
                <Label x={277} y={480}>pedals*</Label>
                <Node x={653} y={396} w={400} h={200} c="#111" r={30} />
                <Node x={550} y={838} w={400} h={98} />
                <Label x={625} y={888}>gre</Label>

                <Node x={682} y={164} w={2200} h={836} c="#111" r={40} />
                <DoubleBox x={688} y={246} w={385} h={92} />
                <Label x={760} y={294}>annunciation*</Label>
                <Node x={682} y={448} w={284} h={98} />
                <Label x={760} y={498}>pedals*</Label>

                <Node x={1137} y={182} w={1500} h={668} c="#111" r={40} />
                <Node x={1137} y={258} w={270} h={102} c="#444" sw={3.5} />
                <Label x={1212} y={312} c="#111">wheel*</Label>
                <Node x={1139} y={424} w={500} h={98} c="#111" />
                <Label x={1212} y={478} c="#111">green_pump*</Label>
                <Node x={1137} y={588} w={306} h={100} c="#555" sw={3.5} />
                <Label x={1212} y={642} c="#111">selector*</Label>
                <Node x={1139} y={755} w={282} h={98} c="#111" />
                <Label x={1212} y={807} c="#111">pedals*</Label>
                <path d="M1032 893a40 40 0 0140-40H1382a40 40 0 0140 40V913a40 40 0 01-40 40H1072a40 40 0 01-40-40z" fill="none" stroke="#777" strokeWidth="6" />
                <Label x={1108} y={907}>green_pump*</Label>

                {DASHES.map((d) => (
                    <path key={d} d={d} {...dashStyle} />
                ))}
                {RIGHT_HEADS.map(([x, y]) => (
                    <path key={`${x}-${y}`} d={`M${x} ${y - 17}L${x + 25} ${y}L${x} ${y + 17}`} {...lineStyle} stroke="#333" strokeWidth="3.4" />
                ))}
                {DOWN_HEADS.map(([x, y]) => (
                    <path key={`${x}-${y}`} d={`M${x - 17} ${y}L${x} ${y + 22}L${x + 17} ${y}`} {...lineStyle} stroke="#333" strokeWidth="3.4" />
                ))}
                <path d="M650 205V360M625 360L785 310M630 197L1460 718" {...lineStyle} strokeWidth="3.5" />
                <path d="M655 176L638 205H675zM655 210L642 238H678z" fill="#fff" stroke="#111" strokeWidth="3" />
                <path d="M1105 240V378M1085 378L1185 325M1085 378L1105 365M1140 207L1460 178" {...lineStyle} strokeWidth="3.5" />
                <path d="M1112 190L1090 216H1132zM1112 226L1096 254H1130z" fill="#fff" stroke="#111" strokeWidth="3" />
            </g>
            <text x="468" y="367" fill="#111" fontSize="13">wbs</text>
        </DiagramSvg>
    );
}

export default function App() {
    return (
        <Root>
            <GlobalStyle />
            <TitleBar>
                <Icon n="osate" s={15} />
                <TitleText>workspace - ARP4761/diagrams/wbs.aadl_diagram - OSATE2</TitleText>
                <WindowButtons>
                    <WindowButton>
                        <svg width="10" height="10" viewBox="0 0 10 10"><path d="M0 5h10" stroke="#111" /></svg>
                    </WindowButton>
                    <WindowButton>
                        <svg width="10" height="11" viewBox="0 0 10 11"><path d="M.5 2.5h7v8h-7zM2.5 2.5V.5h7v8h-2" fill="none" stroke="#111" /></svg>
                    </WindowButton>
                    <WindowButton>
                        <svg width="12" height="12" viewBox="0 0 12 12"><path d="M.5.5l11 11M11.5.5l-11 11" stroke="#111" /></svg>
                    </WindowButton>
                </WindowButtons>
            </TitleBar>
            <MenuBar>
                {["File", "Edit", "View", "Navigate", "Search", "Project", "Run", "OSATE", "Analyses", "Window", "Help"].map((m) => (
                    <span key={m}>{m}</span>
                ))}
            </MenuBar>
            <TopToolbar />
            <ToolRowTwo>
                <Slot $gap={1} $w={2}><Grip /></Slot>
                <Slot $gap={4} $w={16}><Icon n="zoomout" /></Slot>
                <Slot $gap={8} $w={16}><Icon n="zoomin" /></Slot>
                <Slot $gap={5} $w={66}>
                    <Combo $w={66}>100%<ChevronDown /></Combo>
                </Slot>
                <Slot $gap={2} $w={306}>
                    <Combo $w={306}>&lt;Modes&gt;<ChevronDown /></Combo>
                </Slot>
                <Slot $gap={4} $w={1}><VLine /></Slot>
                <Slot $gap={6} $w={310}>
                    <Combo $w={310}>&lt;Flows&gt;<ChevronDown /></Combo>
                </Slot>
                <StateButton>
                    <svg width="16" height="16" viewBox="0 0 16 16"><circle cx="8" cy="8" r="7" fill="none" stroke="#999" strokeWidth="1.5" /><circle cx="8" cy="8" r="3.5" fill="#999" /></svg>
                </StateButton>
                <StateButton>
                    <svg width="16" height="16" viewBox="0 0 16 16"><path d="M2 14l1-4 9-9 3 3-9 9z" fill="none" stroke="#999" /></svg>
                </StateButton>
                <StateButton>
                    <svg width="14" height="14" viewBox="0 0 14 14"><path d="M2 2l10 10M12 2L2 12" stroke="#999" strokeWidth="3.5" /></svg>
                </StateButton>
                <VLine />
                <RightTools>
                    <Icon n="lens" />
                    <Slot $gap={17} $w={2}><Grip /></Slot>
                    <Slot $gap={5} $w={16}><Icon n="openp" /></Slot>
                    <Slot $gap={5} $w={1}><VLine /></Slot>
                    <ActivePerspective><Icon n="osate" /></ActivePerspective>
                </RightTools>
            </ToolRowTwo>
            <Workbench>
                <NavigatorPane>
                    <PaneTabs>
                        <NavTab $active $w={140}>
                            <Icon n="osate" />
                            AADL Navigator
                            <XMark />
                        </NavTab>
                        <NavTab $w={120}>
                            <Icon n="diagram" />
                            AADL Diagrams
                        </NavTab>
                        <PaneControls>
                            <MinBox />
                            <MaxBox />
                        </PaneControls>
                    </PaneTabs>
                    <ViewToolbar>
                        <Icon n="collapse" s={14} />
                        <Icon n="link" s={14} />
                        <Icon n="filter" s={14} />
                        <VLine />
                        <Icon n="graydots" s={14} />
                        <Icon n="vmenu" s={14} />
                    </ViewToolbar>
                    <TreeShell>
                        <TreeList>
                            {TREE.map(([level, twist, icon, text]) => (
                                <TreeRow key={text + level} $level={level}>
                                    <Twisty>
                                        {twist === ">" ? <ChevronRight c="#8a8a8a" /> : twist === "v" ? <ChevronOpen /> : null}
                                    </Twisty>
                                    <TreeLabel $selected={text === "wbs.aadl"}>
                                        <Icon n={icon} />
                                        <TreeText>{text}</TreeText>
                                    </TreeLabel>
                                </TreeRow>
                            ))}
                        </TreeList>
                        <ScrollV>
                            <svg width="10" height="16" viewBox="0 0 10 16"><path d="M1 10l4-4 4 4" fill="none" stroke="#555" strokeWidth="1.5" /></svg>
                            <ScrollThumbV />
                            <ScrollArrowEnd width="10" height="16" viewBox="0 0 10 16"><path d="M1 6l4 4 4-4" fill="none" stroke="#555" strokeWidth="1.5" /></ScrollArrowEnd>
                        </ScrollV>
                        <ScrollH>
                            <svg width="16" height="15" viewBox="0 0 16 15"><path d="M10 3.5l-4 4 4 4" fill="none" stroke="#555" strokeWidth="1.5" /></svg>
                            <ScrollThumbH />
                            <svg width="10" height="15" viewBox="0 0 10 15"><path d="M3 3.5l4 4-4 4" fill="none" stroke="#555" strokeWidth="1.5" /></svg>
                        </ScrollH>
                    </TreeShell>
                </NavigatorPane>
                <EditorPane>
                    <EditorTabs>
                        {TABS.map(([icon, text, w]) => (
                            <EditorTab key={text} $w={w}>
                                <Icon n={icon} />
                                {text}
                            </EditorTab>
                        ))}
                        <EditorTab $active $w={131}>
                            <Icon n="winfile" />
                            *wbs.aadl_d...
                            <XMark />
                        </EditorTab>
                        <ChevronCount>
                            »<span>16</span>
                        </ChevronCount>
                        <PaneControls>
                            <MinBox />
                            <MaxBox />
                        </PaneControls>
                    </EditorTabs>
                    <EditorBody>
                        <Canvas>
                            <Diagram />
                        </Canvas>
                        <Palette>
                            <PaletteHead>
                                Palette
                                <svg width="7" height="12" viewBox="0 0 7 12"><path d="M1 1l5 5-5 5z" fill="#fff" stroke="#999" /></svg>
                            </PaletteHead>
                            <PaletteTool $on>
                                <Icon n="cursor" />
                                Select
                            </PaletteTool>
                            <PaletteTool>
                                <Icon n="marquee" />
                                Marquee
                            </PaletteTool>
                            {DRAWERS.map((d) => (
                                <Drawer key={d}>
                                    <Icon n="folder" />
                                    {d}
                                </Drawer>
                            ))}
                        </Palette>
                    </EditorBody>
                </EditorPane>
                <TrimBar>
                    <TrimGrip />
                    <TrimIcon $gap={5}><Icon n="restore" /></TrimIcon>
                    {TRIM.map(([n, g]) => (
                        <TrimIcon key={n} $gap={g}>
                            <Icon n={n} />
                        </TrimIcon>
                    ))}
                    <TrimGrip $top={5} />
                    <TrimIcon $gap={5}><Icon n="restore" /></TrimIcon>
                    <TrimIcon $gap={6}><Icon n="outline" /></TrimIcon>
                </TrimBar>
            </Workbench>
            <StatusBar>
                <Grip />
            </StatusBar>
            <ContextMenu items={MAIN_MENU} left={937} top={234} w={350} col={32} sepCol={28} />
            <ContextMenu items={LAYOUT_MENU} left={1281} top={380} w={267} col={33} sepCol={29} />
            <ArrowLayer width="1920" height="1040" viewBox="0 0 1920 1040">
                <path d="M828 317L935.5 374 939.5 367 959 393 926.5 389 930.5 382z" fill="#ee4b50" />
                <path d="M1446 282L1425 361 1420 387 1407 399 1405 383 1414 362z" fill="#ee4b50" />
            </ArrowLayer>
        </Root>
    );
}
